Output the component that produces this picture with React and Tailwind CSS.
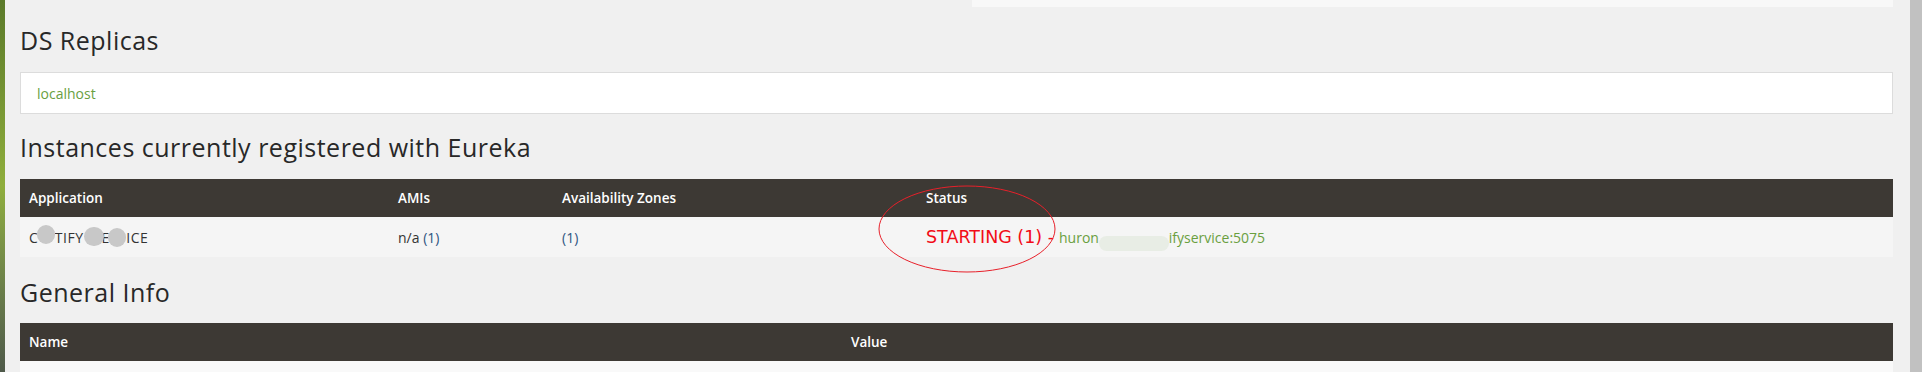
const font = { fontFamily: '"Open Sans", "Liberation Sans", sans-serif' };

const Blob = ({ className }) => (
  <span className={`inline-block shrink-0 rounded-full bg-[#c8c8c8] ${className}`}></span>
);

const App = () => {
  return (
    <div className="flex h-[372px] w-[1922px] overflow-hidden bg-[#f0f0f0]" style={font}>
      {/* photo edge on the left */}
      <div className="w-[5px] bg-gradient-to-b from-[#5b7a2a] via-[#8fae3c] to-[#4f5a4a]"></div>

      <div className="flex-1 pl-[15px] pr-[17px]">
        <div className="ml-[952px] h-[7px] bg-[#f8f8f8]"></div>

        <h2 className="mt-[17px] text-[25px] leading-[32px] font-medium tracking-[0.5px] text-[#282828]">DS Replicas</h2>
        <div className="mt-[16px] flex h-[42px] items-center border border-[#dcdcdc] bg-white px-[16px]">
          <span className="text-[14px] text-[#6a9f3f]">localhost</span>
        </div>

        <h2 className="mt-[17px] text-[25px] leading-[32px] font-medium tracking-[0.5px] text-[#282828]">
          Instances currently registered with Eureka
        </h2>
        <div className="relative mt-[16px]">
          <div className="grid h-[38px] grid-cols-[369px_164px_364px_1fr] items-center bg-[#3d3934] text-[13.5px] font-semibold text-white">
            <div className="pl-[9px]">Application</div>
            <div className="pl-[9px]">AMIs</div>
            <div className="pl-[9px]">Availability Zones</div>
            <div className="pl-[9px]">Status</div>
          </div>
          <div className="grid h-[40px] grid-cols-[369px_164px_364px_1fr] items-center bg-[#f5f5f5] text-[14px] text-[#333]">
            <div className="flex items-center pl-[9px]">
              <span>C</span>
              <Blob className="-ml-[1px] h-[19px] w-[18px] -translate-y-[3px]" />
              <span className="tracking-[0.5px]">TIFY</span>
              <Blob className="h-[19px] w-[20px] -translate-y-[1px]" />
              <span className="-ml-[2px]">E</span>
              <Blob className="-ml-[1px] h-[19px] w-[18px]" />
              <span className="tracking-[0.5px]">ICE</span>
            </div>
            <div className="pl-[9px]">
              n/a <span className="text-[#2f5480]">(1)</span>
            </div>
            <div className="pl-[9px] text-[#2f5480]">(1)</div>
            <div className="flex items-center pl-[9px]">
              <span className="text-[17.5px] text-[#f20c17]" style={{ fontFamily: '"DejaVu Sans", sans-serif' }}>
                STARTING (1) -
              </span>
              <span className="ml-[5px] flex items-center text-[14px] text-[#6a9f3f]">
                <span>hurone</span>
                <span className="relative -ml-[8px] inline-block h-[20px] w-[70px] bg-[#f5f5f5]">
                  <span className="absolute left-0 top-[9px] h-[15px] w-[70px] rounded-[8px] bg-[#e8ede5]"></span>
                </span>
                <span>ifyservice:5075</span>
              </span>
            </div>
          </div>
          <svg className="absolute left-[858px] top-[5px]" width="180" height="90" viewBox="0 0 180 90">
            <ellipse cx="89" cy="45" rx="88" ry="43" fill="none" stroke="#e8202a" strokeWidth="1" />
          </svg>
        </div>

        <h2 className="mt-[19px] text-[25px] leading-[32px] font-medium tracking-[0.5px] text-[#282828]">General Info</h2>
        <div className="mt-[15px]">
          <div className="grid h-[38px] grid-cols-[822px_1fr] items-center bg-[#3d3934] text-[13.5px] font-semibold text-white">
            <div className="pl-[9px]">Name</div>
            <div className="pl-[9px]">Value</div>
          </div>
          <div className="h-[40px] bg-[#f9f9f9]"></div>
        </div>
      </div>

      {/* scrollbar */}
      <div className="w-[12px] bg-[#c1c1c1]"></div>
    </div>
  );
};

export default App;
